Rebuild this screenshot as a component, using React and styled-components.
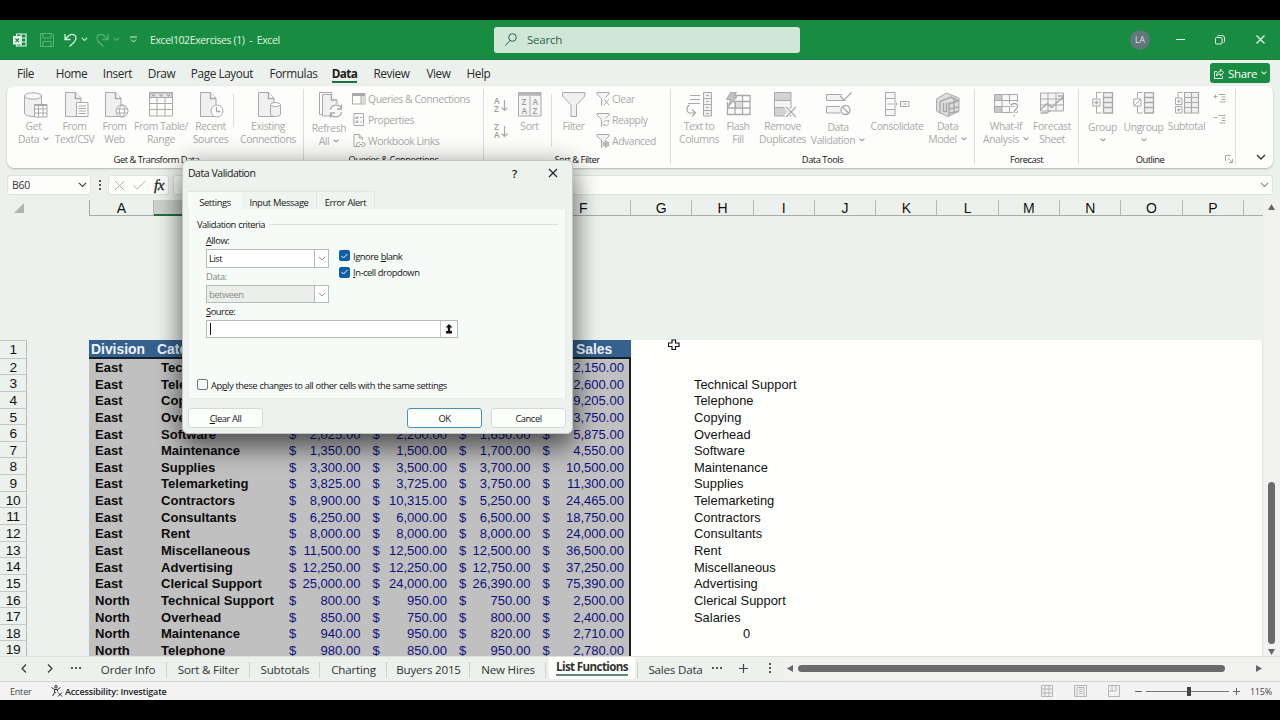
import React from 'react';
import styled, { createGlobalStyle, css } from 'styled-components';

const green = '#188c40';
const chrome = '#edf1ed';
const iconGray = '#a9a9a9';
const navy = '#10107c';

const GlobalStyle = createGlobalStyle`
  * { box-sizing: border-box; }
  body { margin: 0; background: #000; overflow: hidden; }
`;

const Screen = styled.div`
  position: relative;
  width: 1280px;
  height: 720px;
  padding: 20px 0;
  display: flex;
  flex-direction: column;
  overflow: hidden;
  background: #000;
  font-family: 'Open Sans', 'Noto Sans', sans-serif;
  white-space: nowrap;
`;

/* ---------- title bar ---------- */
const TitleBar = styled.header`
  display: grid;
  grid-template-columns: 40px 24px 32px 34px 20px 344px 306px 360px 40px 40px 40px;
  align-items: center;
  flex: 0 0 40px;
  background: ${green};
  border-bottom: 1px solid #11803a;
  color: #fff;
`;
const TitleSlot = styled.div`
  display: flex;
  align-items: center;
  gap: 4px;
  justify-content: ${(p) => p.$align || 'flex-start'};
  padding-right: ${(p) => p.$pr || 0}px;
`;
const FileName = styled.span`
  padding-top: 1px;
  font-size: 10.5px;
  letter-spacing: -0.4px;
  color: #e2f3e6;
  white-space: pre;
`;
const SearchBox = styled.div`
  display: flex;
  align-items: center;
  gap: 10px;
  height: 26px;
  padding-left: 11px;
  border-radius: 3px;
  background: #d0e6d7;
  color: #28663f;
  font-size: 11.5px;
  letter-spacing: -0.2px;
`;
const Avatar = styled.div`
  width: 20px;
  height: 20px;
  border-radius: 50%;
  background: #64767a;
  color: #dde6e6;
  font-size: 8.5px;
  line-height: 20px;
  text-align: center;
`;

/* ---------- menu tabs ---------- */
const MenuBar = styled.nav`
  display: flex;
  align-items: flex-start;
  flex: 0 0 26px;
  padding: 3px 10px 0 8px;
  background: ${chrome};
`;
const MenuItem = styled.div`
  display: flex;
  justify-content: center;
  width: ${(p) => p.$w}px;
  font-size: 11.8px;
  line-height: 21px;
  letter-spacing: -0.42px;
  color: #2b2b2b;
`;
const MenuText = styled.span`
  height: 20px;
  ${(p) => p.$active && css`
    font-weight: 700;
    letter-spacing: -0.65px;
    color: #1b1b1b;
    border-bottom: 2px solid #1a7340;
  `}
`;
const ShareButton = styled.div`
  display: flex;
  align-items: center;
  gap: 4px;
  margin-left: auto;
  width: 60px;
  height: 20px;
  padding-left: 4px;
  border-radius: 3px;
  background: ${green};
  color: #fff;
  font-size: 11.5px;
  letter-spacing: -0.35px;
`;

/* ---------- ribbon ---------- */
const RibbonWrap = styled.div`
  flex: 0 0 89px;
  padding: 0 7px;
  background: ${chrome};
`;
const Ribbon = styled.div`
  display: flex;
  height: 82px;
  padding-top: 3px;
  border-radius: 7px;
  background: #fdfefb;
  box-shadow: 0 1px 2px rgba(0, 0, 0, 0.25);
`;
const Group = styled.section`
  display: flex;
  flex-direction: column;
  justify-content: space-between;
  width: ${(p) => p.$w}px;
  height: 75px;
  border-right: 1px solid #dcdcdc;
`;
const GroupBody = styled.div`
  display: flex;
  height: 64px;
  padding-left: ${(p) => p.$pl || 0}px;
`;
const GroupLabel = styled.div`
  display: flex;
  justify-content: center;
  height: 10px;
  padding-left: ${(p) => p.$pl || 0}px;
  padding-right: ${(p) => p.$pr || 0}px;
  font-size: 9.4px;
  line-height: 11px;
  letter-spacing: -0.5px;
  color: #161616;
`;
const Tool = styled.div`
  display: flex;
  flex-direction: column;
  align-items: center;
  width: ${(p) => p.$w}px;
  padding-top: 3px;
`;
const ToolIcon = styled.div`
  height: ${(p) => 27 + (p.$drop || 0)}px;
  padding-left: ${(p) => (p.$dx || 0) * 2}px;
`;
const ToolText = styled.div`
  display: flex;
  align-items: center;
  gap: 4px;
  height: 13px;
  font-size: 10.4px;
  letter-spacing: -0.4px;
  color: #a9a9a9;
`;
const Divider = styled.div`
  width: 1px;
  height: ${(p) => p.$h}px;
  margin-top: 5px;
  background: #dcdcdc;
`;
const SmallList = styled.div`
  display: flex;
  flex-direction: column;
  width: ${(p) => p.$w}px;
  padding-left: ${(p) => p.$pl || 0}px;
  margin-top: -1px;
`;
const SortPair = styled.div`
  display: flex;
  flex-direction: column;
  gap: 6px;
  width: 24px;
  padding: 7px 0 0 9px;
`;
const SmallTool = styled.div`
  display: flex;
  align-items: center;
  gap: 2px;
  height: 21.3px;
  font-size: 10.4px;
  letter-spacing: -0.44px;
  color: #a9a9a9;
`;
const RibbonEnd = styled.div`
  display: flex;
  align-items: flex-end;
  justify-content: center;
  flex: 1;
  padding: 0 0 8px 13px;
`;
const OutlineFooter = styled.div`
  display: grid;
  grid-template-columns: 1fr 8px;
  padding: 0 2px 0 0;
  align-items: center;
`;

/* ---------- formula bar ---------- */
const FormulaBar = styled.div`
  display: grid;
  grid-template-columns: 84px 17px 61px 1fr;
  column-gap: 0;
  flex: 0 0 25px;
  align-items: start;
  padding: 0 7px;
  background: ${chrome};
`;
const BarBox = styled.div`
  display: flex;
  align-items: center;
  justify-content: ${(p) => p.$justify || 'space-between'};
  gap: 8px;
  height: 20px;
  margin-left: ${(p) => p.$ml || 0}px;
  padding: 0 3px 0 4px;
  border: 1px solid #e0e3e0;
  border-radius: 3px;
  background: #fdfefb;
  font-size: 10.5px;
  letter-spacing: -0.3px;
  color: #333;
`;
const Dots = styled.div`
  display: flex;
  flex-direction: ${(p) => (p.$row ? 'row' : 'column')};
  gap: 2px;
  align-self: center;
  justify-self: center;
  padding-bottom: ${(p) => p.$pb || 0}px;
  i { width: 2px; height: 2px; border-radius: 1px; background: #222; }
`;
const Fx = styled.span`
  font-family: 'Liberation Serif', serif;
  font-style: italic;
  font-size: 15px;
  color: #222;
  -webkit-text-stroke: 0.3px #222;
`;

/* ---------- grid ---------- */
const SheetArea = styled.main`
  display: flex;
  flex: 0 0 456px;
  min-height: 0;
  height: 456px;
  overflow: hidden;
  background: ${chrome};
`;
const Sheet = styled.div`
  width: 1263px;
  height: 456px;
  display: flex;
  flex-direction: column;
  font-family: 'Liberation Sans', Arial, sans-serif;
`;
const HeaderRow = styled.div`
  display: flex;
  flex: 0 0 16px;
  height: 16px;
`;
const Corner = styled.div`
  width: 89px;
  padding: 3px 0 0 14px;
  svg { display: block; }
`;
const ColHead = styled.div`
  width: ${(p) => p.$w}px;
  height: 16px;
  font-size: 14px;
  line-height: 17px;
  text-align: center;
  color: #111;
  border-left: ${(p) => (p.$first ? '1px solid #a8aca8' : 0)};
  border-right: 1px solid #b4b8b4;
  border-bottom: 1px solid #a8aca8;
  flex-shrink: 0;
  ${(p) => p.$selected && css`
    background: #cfd1cf;
    border-bottom: 2px solid #1a7340;
  `}
`;
const ColHeadRest = styled.div`
  flex: 1;
  border-bottom: 1px solid #a8aca8;
`;
const FrozenGap = styled.div`
  flex: 0 0 124px;
`;
const GridBody = styled.div`
  display: flex;
  flex: 1;
  min-height: 0;
  overflow: hidden;
`;
const RowHeads = styled.div`
  width: 27px;
  border-right: 1px solid #b9bdb9;
  margin-right: 62px;
`;
const RowHead = styled.div`
  height: ${(p) => (p.$first ? 18.6 : 16.65)}px;
  font-size: 13.7px;
  line-height: ${(p) => (p.$first ? 18 : 17)}px;
  text-align: center;
  letter-spacing: -0.4px;
  color: #111;
  border-top: ${(p) => (p.$first ? '1px solid #c4c8c4' : 0)};
  border-bottom: 1px solid #c4c8c4;
`;
const DataTable = styled.div`
  width: 542px;
  background: #c0c0c0;
  border-right: 2px solid #1c1c1c;
`;
const cols = '65px 129px 83.5px 86.5px 83.5px 92.5px';
const DataHead = styled.div`
  display: grid;
  grid-template-columns: ${cols};
  width: 542px;
  height: 19px;
  padding-left: 2px;
  background: #36618f;
  border-bottom: 2px solid #14202e;
  font-size: 13.9px;
  font-weight: 700;
  line-height: 19px;
  color: #f2f6fa;
`;
const HeadCell = styled.span`
  padding-left: ${(p) => p.$pl || 0}px;
`;
const DataRow = styled.div`
  display: grid;
  grid-template-columns: ${cols};
  height: 16.65px;
  font-size: 13.05px;
  line-height: 17px;
`;
const Label = styled.span`
  padding-left: ${(p) => p.$pl}px;
  font-weight: 700;
  color: #0b0b0b;
`;
const Money = styled.span`
  display: flex;
  justify-content: space-between;
  padding: 0 ${(p) => (p.$last ? 5 : 6)}px 0 6px;
  color: ${navy};
`;
const ListPane = styled.div`
  flex: 1;
  padding: 35.6px 0 0 63px;
  background: #fefffc;
  border-right: 1px solid #dfe3df;
  font-size: 12.9px;
  color: #111;
`;
const ListItem = styled.div`
  height: 16.65px;
  line-height: 17px;
  padding-left: ${(p) => (p.$number ? 49 : 0)}px;
`;
const VScroll = styled.div`
  display: flex;
  flex-direction: column;
  align-items: center;
  width: 17px;
  padding-top: 4px;
  background: #f1f2f0;
`;
const VThumb = styled.div`
  flex-shrink: 0;
  width: 7px;
  height: 162px;
  margin: 271px 0 4px;
  border-radius: 4px;
  background: #6b6b6b;
`;

/* ---------- sheet tabs ---------- */
const TabsBar = styled.div`
  display: flex;
  flex: 0 0 26px;
  height: 26px;
  border-top: 1px solid #dde1dd;
  border-bottom: 1px solid #d0d4d0;
  background: ${chrome};
`;
const TabsNav = styled.div`
  display: grid;
  grid-template-columns: 27px 26px 26px;
  justify-items: center;
  align-items: center;
  flex: 0 0 89px;
  padding: 0 0 2px 10px;
`;
const SheetTab = styled.div`
  flex: 0 0 ${(p) => p.$w}px;
  display: flex;
  justify-content: center;
  font-size: 11.6px;
  line-height: 25px;
  letter-spacing: -0.2px;
  color: #333;
  position: relative;
  &::after {
    content: '';
    position: absolute;
    right: 0;
    top: 5px;
    height: 16px;
    border-right: ${(p) => (p.$last ? 0 : 1)}px solid #cfd3cf;
  }
  ${(p) => p.$active && css`
    span {
      height: 22px;
      padding: 0 7px;
      background: #fefffc;
      border-radius: 0 0 4px 4px;
    }
    b {
      display: block;
      height: 19px;
      line-height: 20px;
      font-weight: 700;
      letter-spacing: -0.62px;
      border-bottom: 2px solid #5b8b74;
    }
  `}
`;
const TabTools = styled.div`
  display: grid;
  grid-template-columns: 24px 28px 26px;
  align-items: center;
  justify-items: center;
  flex: 0 0 78px;
  margin-left: -8px;
  padding-bottom: 2px;
`;
const HScroll = styled.div`
  display: flex;
  align-items: center;
  flex: 1;
  padding: 0 19px 1px 4px;
  background: #f1f2f0;
`;
const HThumb = styled.div`
  flex: 0 0 427px;
  height: 7px;
  margin: 0 30px 0 4px;
  border-radius: 4px;
  background: #6b6b6b;
`;

/* ---------- status bar ---------- */
const StatusBar = styled.footer`
  display: flex;
  align-items: center;
  flex: 0 0 18px;
  height: 18px;
  padding: 0 8px 0 10px;
  background: #f3f3f3;
  font-size: 9px;
  letter-spacing: -0.2px;
  color: #444;
`;
const Mode = styled.span`
  width: 41px;
`;
const Access = styled.span`
  display: flex;
  align-items: center;
  gap: 2px;
  font-weight: 600;
  letter-spacing: -0.15px;
  color: #222;
`;
const ViewIcons = styled.div`
  display: flex;
  gap: 21px;
  margin-left: auto;
  margin-right: 15px;
`;
const Zoom = styled.div`
  display: flex;
  align-items: center;
  gap: 4px;
  margin-right: 10px;
`;
const ZoomTrack = styled.div`
  display: flex;
  justify-content: center;
  align-items: center;
  width: 83px;
  height: 10px;
  background: linear-gradient(#777, #777) center / 100% 1px no-repeat;
  &::before {
    content: '';
    width: 4px;
    height: 9px;
    margin-left: 4px;
    background: #444;
  }
`;

/* ---------- dialog ---------- */
const Dialog = styled.div`
  position: absolute;
  left: 182px;
  top: 160px;
  width: 391px;
  height: 274px;
  display: flex;
  flex-direction: column;
  padding: 0 6px 0 5px;
  border: 1px solid #c3c7c4;
  border-radius: 6px;
  background: #eef2ef;
  box-shadow: 0 14px 26px rgba(0, 0, 0, 0.5), 0 0 26px rgba(0, 0, 0, 0.22);
  font-size: 9.4px;
  letter-spacing: -0.47px;
  word-spacing: 0.3px;
  color: #161616;
  u { text-underline-offset: 1px; }
`;
const DialogTitle = styled.div`
  display: grid;
  grid-template-columns: 1fr 36px 18px;
  align-items: center;
  height: 30px;
  padding-bottom: 6px;
  font-size: 10.5px;
  letter-spacing: -0.5px;
  svg { display: block; }
`;
const Help = styled.span`
  font-size: 11.5px;
  font-weight: 600;
`;
const DialogTabs = styled.div`
  display: flex;
  height: 18px;
`;
const DialogTab = styled.div`
  width: ${(p) => p.$w}px;
  line-height: 22px;
  text-align: center;
  border-right: 1px solid #e2e6e3;
  border-top: 1px solid #e2e6e3;
  background: ${(p) => (p.$active ? '#f7fbf8' : '#f0f4f1')};
  letter-spacing: -0.4px;
  ${(p) => p.$active && css`border-right: 0; line-height: 21px;`}
`;
const Panel = styled.div`
  display: flex;
  flex-direction: column;
  height: 190px;
  padding: 8px 7px 0 8px;
  border: 1px solid #e8ece9;
  border-top: 0;
  background: #f7fbf8;
`;
const Legend = styled.div`
  display: flex;
  align-items: center;
  gap: 5px;
  height: 14px;
  &::after {
    content: '';
    flex: 1;
    height: 1px;
    background: #dde1de;
  }
`;
const Criteria = styled.div`
  display: flex;
  gap: 10px;
  padding: 2px 0 0 9px;
`;
const Fields = styled.div`
  display: flex;
  flex-direction: column;
  width: 123px;
`;
const FieldLabel = styled.label`
  height: ${(p) => p.$h}px;
  line-height: ${(p) => p.$h}px;
  color: ${(p) => (p.$disabled ? '#7f8380' : 'inherit')};
`;
const Select = styled.div`
  display: flex;
  justify-content: space-between;
  height: ${(p) => (p.$disabled ? 18 : 19)}px;
  border: 1px solid #b7bbb8;
  background: ${(p) => (p.$disabled ? '#eceeec' : '#fefffe')};
  color: ${(p) => (p.$disabled ? '#8a8d8a' : 'inherit')};
  line-height: 18px;
  padding-left: 2px;
`;
const SelectArrow = styled.div`
  display: flex;
  align-items: center;
  justify-content: center;
  width: 14px;
  border-left: 1px solid #b7bbb8;
  background: #fefffe;
`;
const Checks = styled.div`
  display: flex;
  flex-direction: column;
  gap: 2.7px;
  padding-top: 16px;
`;
const CheckRow = styled.div`
  display: flex;
  align-items: center;
  gap: 3px;
  height: 14px;
`;
const CheckBox = styled.div`
  display: flex;
  align-items: center;
  justify-content: center;
  width: 11px;
  height: 11px;
  margin-bottom: 1px;
  border-radius: 2px;
  border: 1px solid ${(p) => (p.$on ? '#0b5fa8' : '#777')};
  background: ${(p) => (p.$on ? '#0b5fa8' : '#fbfdfb')};
`;
const SourceInput = styled.div`
  display: flex;
  justify-content: space-between;
  align-items: center;
  width: 252px;
  height: 18px;
  margin-left: 9px;
  padding-left: 3px;
  border: 1px solid #b7bbb8;
  background: #fefffe;
`;
const Caret = styled.div`
  width: 1px;
  height: 12px;
  background: #111;
`;
const PickButton = styled.div`
  display: flex;
  align-items: center;
  justify-content: center;
  width: 17px;
  height: 16px;
  border-left: 1px solid #c9cdca;
`;
const ApplyRow = styled.div`
  margin-top: auto;
  padding-bottom: 6px;
`;
const Footer = styled.div`
  display: flex;
  gap: 9px;
  padding-top: 9px;
`;
const Button = styled.div`
  width: 75px;
  height: 20px;
  margin-right: ${(p) => (p.$left ? 'auto' : 0)};
  border: 1px solid ${(p) => (p.$primary ? '#4a90c4' : '#d6dad7')};
  border-radius: 3px;
  background: #fcfefc;
  line-height: 19px;
  text-align: center;
`;
const Pointer = styled.svg`
  position: absolute;
  left: 668px;
  top: 339px;
`;

/* ---------- icons ---------- */
const Chevron = ({ size = 6, color = '#999', w = 1.1 }) => (
  <svg width={size} height={size * 0.6} viewBox="0 0 10 6" fill="none" stroke={color} strokeWidth={(w * 10) / size}>
    <path d="M1 1l4 4 4-4" />
  </svg>
);

const IconSvg = styled.svg`
  display: block;
  flex-shrink: 0;
`;
const Icon = ({ w = 26, h = 26, children, color = iconGray }) => (
  <IconSvg width={w} height={h} viewBox={`0 0 ${w} ${h}`} fill="none" stroke={color} strokeWidth="1">
    {children}
  </IconSvg>
);

const Doc = () => (
  <>
    <path d="M1.500 .5h10l5.500 5.500v18.500h-15.500z" fill="#f0f0f0" />
    <path d="M11.500 .5v6h5.500" fill="#fff" strokeWidth="1.500" />
  </>
);

const GetDataIcon = () => (
  <Icon>
    <path d="M1.500 4v17c0 2 4 3.500 8.500 3.500s8.500-1.500 8.500-3.500v-17" fill="#f0f0f0" />
    <ellipse cx="10" cy="4" rx="8.500" ry="3.200" fill="#f7f7f7" />
    <path d="M11.500 12.500h12.500v12.500h-12.500z" fill="#fff" />
    <path d="M11.500 13.500h12.500M11.500 17h12.500M11.500 21h12.500M15.500 13v12M20 13v12" />
  </Icon>
);
const TextCsvIcon = () => (
  <Icon>
    <Doc />
    <path d="M12.500 10.500h11.500v14h-11.500z" fill="#fff" />
    <path d="M14.500 14h7.500M14.500 16.500h7.500M14.500 19h7.500M14.500 21.500h7.500" />
  </Icon>
);
const WebIcon = () => (
  <Icon>
    <Doc />
    <circle cx="18" cy="19" r="6" fill="#fff" />
    <ellipse cx="18" cy="19" rx="2.700" ry="6" />
    <path d="M12.500 17h11M12.500 21h11" />
  </Icon>
);
const TableIcon = () => (
  <Icon>
    <path d="M1.500 .5h23v23.500h-23z" />
    <path d="M2 1h22v4.500h-22z" fill="#e4e4e4" />
    <path d="M1.500 11.500h23M1.500 17.500h23M9 5.500v18.500M17 5.500v18.500" />
    <path d="M4 2.500l1.500 1.500L7 2.500M11.500 2.500l1.500 1.500 1.500-1.500M19 2.500l1.500 1.500L22 2.500" strokeWidth="1.300" />
  </Icon>
);
const RecentIcon = () => (
  <Icon>
    <Doc />
    <circle cx="18" cy="19" r="6" fill="#fff" />
    <path d="M17.500 15v4.500h4" strokeWidth="1.300" />
  </Icon>
);
const ExistingIcon = () => (
  <Icon>
    <Doc />
    <path d="M13.500 13v9.500c0 1 2.200 2 5 2s5-1 5-2V13" fill="#f0f0f0" />
    <ellipse cx="18.500" cy="12.500" rx="5" ry="2" fill="#fff" />
  </Icon>
);
const RefreshIcon = () => (
  <Icon>
    <path d="M4 22.500h-2.500v-22h12.500" />
    <path d="M4.500 2.500h9l5.500 5.500v16h-14.500z" fill="#f0f0f0" />
    <path d="M13.500 1.500v6.500h5.500" fill="#fff" strokeWidth="1.500" />
    <circle cx="18" cy="19" r="7" fill="#fdfefb" stroke="none" />
    <path d="M12.500 18c.5-6 9-6.500 11-1.500M23.500 12.500v4.500h-4.500M23.500 20c-.5 6-9 6.500-11 1.500M12.500 25.500v-4.500h4.500" strokeWidth="1.300" />
  </Icon>
);
const PaneIcon = () => (
  <Icon w={14} h={13}>
    <path d="M.5 1.500h12.500v10.500h-12.500z" />
    <path d="M.5 3h12.500" strokeWidth="2" />
    <path d="M9.500 4h3v7.500h-3z" fill="#ddd" stroke="none" />
    <path d="M9 3v9" />
  </Icon>
);
const PropsIcon = () => (
  <Icon w={14} h={13}>
    <path d="M2 .5h9.500v12h-9.500z" />
    <path d="M4 4h2v1.500h-2zM4 8h2v1.500h-2zM8 4.500h2M8 9h2" />
  </Icon>
);
const LinksIcon = () => (
  <Icon w={14} h={14}>
    <path d="M8 12.500h-6v-12h5l3.500 3.500v2M7 .5v3.500h3.500" />
    <path d="M8 8.500h-1.500a1.500 1.500 0 0 0 0 4h1M9.500 8.500h1.500a1.500 1.500 0 0 1 0 4h-1.500M7.500 10.500h3" />
  </Icon>
);
const SortLetters = styled.text`
  font: 600 8.5px 'Open Sans', sans-serif;
  letter-spacing: 0;
  fill: #9c9c9c;
  stroke: none;
`;
const SortSmall = ({ a, b }) => (
  <Icon w={16} h={20}>
    <SortLetters x="1" y="8">{a}</SortLetters>
    <SortLetters x="1" y="15.5">{b}</SortLetters>
    <path d="M11.500 4v10.500M8.500 11.500l3 3 3-3" strokeWidth="1.200" />
  </Icon>
);
const SortIcon = () => (
  <Icon>
    <path d="M1.500 .5h22.500v23.500h-22.500zM13 4v20" fill="#f5f5f5" />
    <path d="M1.500 2h22.500" strokeWidth="3.500" stroke="#b5b5b5" />
    <SortLetters x="4.500" y="13">Z</SortLetters>
    <SortLetters x="4.500" y="22">A</SortLetters>
    <SortLetters x="15.500" y="13">A</SortLetters>
    <SortLetters x="15.500" y="22">Z</SortLetters>
  </Icon>
);
const FilterIcon = () => (
  <Icon>
    <path d="M1.500 .5h22.500v3.500l-8.500 9v11.500h-5.500v-11.500l-8.500-9z" fill="#f0f0f0" />
  </Icon>
);
const SmallFunnel = ({ children }) => (
  <Icon w={14} h={14}>
    <path d="M6 13.500h-.5v-7l-4.500-4.500v-1.500h12v1.500l-3.500 3.500" fill="#f4f4f4" />
    {children}
  </Icon>
);
const TextColsIcon = () => (
  <Icon w={28}>
    <path d="M5 3.500h10M5 7.500h10M3 11.500h12" strokeWidth="1.200" />
    <path d="M4.500 13c-3.500 1.500-3.500 8 1 8h4.500M7 17.500l3.500 3.500-3.500 3.500" strokeWidth="1.200" />
    <path d="M18.500 .5h8v23.500h-8zM18.500 6.500h8M18.500 12.500h8M18.500 18.500h8" fill="#f0f0f0" />
    <path d="M21 3.500h3M21 9.500h3M21 15.500h3M21 21.500h3" />
  </Icon>
);
const FlashIcon = () => (
  <Icon>
    <path d="M2.500 10v12.500h22.500v-19h-15M8 9.500h17M2.500 16h22.500M10 9v13.500M17.500 3.500v19" strokeWidth="1.300" />
    <path d="M10.500 9.500h7v6.500h-7z" fill="#ddd" />
    <path d="M6 0h5.500l-3 5h3.500l-8.500 9.500 2-7h-4z" fill="#c4c4c4" stroke="#a0a0a0" />
  </Icon>
);
const RemoveDupIcon = () => (
  <Icon>
    <path d="M2.500 .5h16.500v8h-16.500z" fill="#d2d2d2" />
    <path d="M2.500 8.500h16.500v7h-16.500z" fill="#f4f4f4" />
    <path d="M2.500 15.500h16.500v8.500h-16.500z" fill="#d2d2d2" />
    <path d="M13.500 14.500l11 10.500M24.500 14.500l-11 10.500" stroke="#fdfefb" strokeWidth="4" />
    <path d="M14 15l10 10M24 15l-10 10" strokeWidth="1.300" />
  </Icon>
);
const ValidationIcon = () => (
  <Icon>
    <path d="M16 2.500h-15.500v6h19M14 14.500h-13.500v6.500h14" fill="#f2f2f2" />
    <path d="M14 4l4 4 7.500-7.500" strokeWidth="1.300" />
    <circle cx="19.500" cy="18" r="4.500" strokeWidth="1.300" fill="#fff" />
    <path d="M16.500 15l6.500 6.500" strokeWidth="1.300" />
  </Icon>
);
const ConsolidateIcon = () => (
  <Icon>
    <path d="M1.500 .5h9.500v6h-9.500zM1.500 17.500h9.500v6h-9.500zM1.500 6.500v11M11 6.500v2.500M11 15v2.500" fill="#f6f6f6" />
    <path d="M3.500 12h9.500M10 9l3.500 3-3.500 3M16.500 9.500h8.500v5h-8.500zM18.500 12h4.500" />
  </Icon>
);
const ModelIcon = () => (
  <Icon>
    <path d="M1.500 7l10-6 12.500 5v13l-11 5.500-8-3.500-3.500-2z" fill="#dedede" />
    <path d="M5 9.500l11-4.500 8 4M5 9.500v11.500M8.500 11v8.500h3v-9M14 10v14M14 12l10-3.500M14 17l10-2M14 21l10-1.500M19 7v15" strokeWidth="1.400" />
  </Icon>
);
const WhatIfIcon = () => (
  <Icon>
    <path d="M1.500 2.500h23v18h-23z" fill="#f7f7f7" />
    <path d="M2 3h7v5.500h-7zM2 14.500h7v6h-7z" fill="#c9c9c9" stroke="none" />
    <path d="M1.500 8.500h23M1.500 14.500h23M9 2.500v18M16.500 2.500v18" />
    <path d="M18 14.500c0-4 7-4 6.500 0-.3 3-3.500 3-3.500 6M21 23v1.500" stroke="#fdfefb" strokeWidth="4.500" />
    <path d="M18 14.500c0-4 7-4 6.500 0-.3 3-3.500 3-3.500 6M21 23v1.500" strokeWidth="1.400" />
  </Icon>
);
const ForecastIcon = () => (
  <Icon>
    <path d="M1.500 1h23v18h-23zM1.500 7h23M1.500 13h23M9 1v18M17 1v18" fill="#f4f4f4" />
    <path d="M1.500 17.500l7-6 4 4 11-10M19 4h5v5M1.500 21h6l4-2.500" strokeWidth="1.400" />
  </Icon>
);
const GroupIcon = ({ ungroup }) => (
  <Icon w={22}>
    <path d="M11.500 .5h9v20.500h-9zM11.500 5.500h9M11.500 10.500h9M11.500 15.500h9" fill="#f0f0f0" strokeWidth="1.300" />
    <path d="M9.500 .5h-5v6M4.500 14v7h5M.8 7h7.200v7h-7.200z" />
    {ungroup ? <path d="M2 13l5-5" /> : <path d="M2.500 10.500h4M4.500 8.500v4" strokeWidth="1.500" />}
  </Icon>
);
const SubtotalIcon = () => (
  <Icon>
    <path d="M10.500 .5h14v20.500h-14zM10.500 5.500h14M10.500 10.500h14M10.500 15.500h14M17.500 .5v20.500" fill="#f0f0f0" strokeWidth="1.200" />
    <path d="M8.500 .5h-4.500v5M1.500 6h6.500v6.500h-6.500zM1.500 14.500h6.500v6.500h-6.500zM3 9.200h3.500M4.700 7.500v3.500M3 17.800h3.500M4.700 16v3.500" />
  </Icon>
);
const DetailIcon = ({ plus }) => (
  <Icon w={14} h={12}>
    <path d="M5.500 1.500h7M8.500 4h4M8.500 6.500h4M6.500 9h6" />
    <path d={plus ? 'M.5 3.500h4M2.500 1.500v4' : 'M.5 3.500h3.500'} />
  </Icon>
);
const ExcelIcon = () => (
  <svg width="14" height="14" viewBox="0 0 14 14" fill="none" stroke="#e6f5ea" strokeWidth="1.200">
    <path d="M3.500 3.500v-2.500h9.500v12h-9.500v-1.500M8 1v12M8.500 5h4.500M8.500 9h4.500" />
    <path d="M.5 3.500h7.500v7.500h-7.500z" fill="#e6f5ea" />
    <path d="M2.500 5.500l3.500 3.700M6 5.500l-3.500 3.700" stroke={green} />
  </svg>
);
const SaveIcon = () => (
  <svg width="14" height="14" viewBox="0 0 14 14" fill="none" stroke="#5fb27b">
    <path d="M.5 .5h11.500l1.500 1.500v11.500h-13zM3 .5v4.500h8v-4.500M3 13.500v-5h8v5" />
  </svg>
);
const UndoIcon = ({ color, flip }) => (
  <svg width="13" height="14" viewBox="0 0 13 14" fill="none" stroke={color} strokeWidth="1.300">
    <g transform={flip ? 'translate(13 0) scale(-1 1)' : undefined}>
      <path d="M1 1v5.500h5.500M1 6.200l4-3.700c3-2.500 7-.5 7 2.500 0 2-.7 3-2 4.200l-4.500 4.300" />
    </g>
  </svg>
);
const Triangle = ({ d, w = 7, h = 7 }) => (
  <IconSvg width={w} height={h} viewBox="0 0 7 7" fill="#666"><path d={d} /></IconSvg>
);
const CheckMark = () => (
  <svg width="7" height="6" viewBox="0 0 7 6" fill="none" stroke="#fff"><path d="M.5 3l2 2 4-4" /></svg>
);

/* ---------- data ---------- */
const menu = [['File', 35], ['Home', 57], ['Insert', 35], ['Draw', 53], ['Page Layout', 68], ['Formulas', 75], ['Data', 27], ['Review', 67], ['View', 27], ['Help', 53]];
const colHeads = [['A', 65], ['B', 129], ['C', 83.5], ['D', 86.5], ['E', 83.5], ['F', 94.5], ['G', 61.3], ['H', 61.3], ['I', 61.3], ['J', 61.3], ['K', 61.3], ['L', 61.3], ['M', 61.3], ['N', 61.3], ['O', 61.3], ['P', 61.3]];
const rows = [
  ['East', 'Technical Support', '700.00', '700.00', '750.00', '2,150.00'],
  ['East', 'Telephone', '850.00', '850.00', '900.00', '2,600.00'],
  ['East', 'Copying', '3,000.00', '3,100.00', '3,105.00', '9,205.00'],
  ['East', 'Overhead', '1,250.00', '1,250.00', '1,250.00', '3,750.00'],
  ['East', 'Software', '2,025.00', '2,200.00', '1,650.00', '5,875.00'],
  ['East', 'Maintenance', '1,350.00', '1,500.00', '1,700.00', '4,550.00'],
  ['East', 'Supplies', '3,300.00', '3,500.00', '3,700.00', '10,500.00'],
  ['East', 'Telemarketing', '3,825.00', '3,725.00', '3,750.00', '11,300.00'],
  ['East', 'Contractors', '8,900.00', '10,315.00', '5,250.00', '24,465.00'],
  ['East', 'Consultants', '6,250.00', '6,000.00', '6,500.00', '18,750.00'],
  ['East', 'Rent', '8,000.00', '8,000.00', '8,000.00', '24,000.00'],
  ['East', 'Miscellaneous', '11,500.00', '12,500.00', '12,500.00', '36,500.00'],
  ['East', 'Advertising', '12,250.00', '12,250.00', '12,750.00', '37,250.00'],
  ['East', 'Clerical Support', '25,000.00', '24,000.00', '26,390.00', '75,390.00'],
  ['North', 'Technical Support', '800.00', '950.00', '750.00', '2,500.00'],
  ['North', 'Overhead', '850.00', '750.00', '800.00', '2,400.00'],
  ['North', 'Maintenance', '940.00', '950.00', '820.00', '2,710.00'],
  ['North', 'Telephone', '980.00', '850.00', '950.00', '2,780.00'],
];
const categories = ['Technical Support', 'Telephone', 'Copying', 'Overhead', 'Software', 'Maintenance', 'Supplies', 'Telemarketing', 'Contractors', 'Consultants', 'Rent', 'Miscellaneous', 'Advertising', 'Clerical Support', 'Salaries'];
const sheetTabs = [['Order Info', 78], ['Sort & Filter', 83], ['Subtotals', 70], ['Charting', 67], ['Buyers 2015', 83], ['New Hires', 76], ['List Functions', 92], ['Sales Data', 75]];

const RibbonTool = ({ w, dx, drop, icon, lines, arrow }) => (
  <Tool $w={w}>
    <ToolIcon $dx={dx} $drop={drop}>{icon}</ToolIcon>
    {lines.map((line, i) => (
      <ToolText key={line || i}>
        {line}
        {arrow && i === lines.length - 1 && <Chevron />}
      </ToolText>
    ))}
  </Tool>
);

const RibbonBar = () => (
  <RibbonWrap>
    <Ribbon>
      <Group $w={297}>
        <GroupBody $pl={6}>
          <RibbonTool w={41} dx={2.5} icon={<GetDataIcon />} lines={['Get', 'Data']} arrow />
          <RibbonTool w={41} dx={2} icon={<TextCsvIcon />} lines={['From', 'Text/CSV']} />
          <RibbonTool w={39} dx={2} icon={<WebIcon />} lines={['From', 'Web']} />
          <RibbonTool w={54} icon={<TableIcon />} lines={['From Table/', 'Range']} />
          <RibbonTool w={45} dx={1.5} icon={<RecentIcon />} lines={['Recent', 'Sources']} />
          <Divider $h={33} />
          <RibbonTool w={68} dx={1.5} icon={<ExistingIcon />} lines={['Existing', 'Connections']} />
        </GroupBody>
        <GroupLabel $pl={3}>Get &amp; Transform Data</GroupLabel>
      </Group>
      <Group $w={180}>
        <GroupBody $pl={3}>
          <RibbonTool w={44} dx={1.5} drop={2} icon={<RefreshIcon />} lines={['Refresh', 'All']} arrow />
          <SmallList $w={130} $pl={1}>
            <SmallTool><PaneIcon />Queries &amp; Connections</SmallTool>
            <SmallTool><PropsIcon />Properties</SmallTool>
            <SmallTool><LinksIcon />Workbook Links</SmallTool>
          </SmallList>
        </GroupBody>
        <GroupLabel>Queries &amp; Connections</GroupLabel>
      </Group>
      <Group $w={187}>
        <GroupBody>
          <SortPair>
            <SortSmall a="A" b="Z" />
            <SortSmall a="Z" b="A" />
          </SortPair>
          <RibbonTool w={43} icon={<SortIcon />} lines={['Sort']} />
          <Divider $h={53} />
          <RibbonTool w={43} icon={<FilterIcon />} lines={['Filter']} />
          <SmallList $w={74} $pl={1}>
            <SmallTool><SmallFunnel><path d="M8 7l5 6M13 7l-5 6" /></SmallFunnel>Clear</SmallTool>
            <SmallTool><SmallFunnel><path d="M8 9.500c.5-2.500 3.500-2.500 4.500-.5v-2M12.500 10.500c-.5 2.500-3.500 2.500-4.500.5v2" /></SmallFunnel>Reapply</SmallTool>
            <SmallTool><SmallFunnel><circle cx="10" cy="10" r="2.500" /><path d="M10 6v8M6.500 8l7 4M6.500 12l7-4" /></SmallFunnel>Advanced</SmallTool>
          </SmallList>
        </GroupBody>
        <GroupLabel>Sort &amp; Filter</GroupLabel>
      </Group>
      <Group $w={304}>
        <GroupBody $pl={7}>
          <RibbonTool w={42} icon={<TextColsIcon />} lines={['Text to', 'Columns']} />
          <RibbonTool w={36} icon={<FlashIcon />} lines={['Flash', 'Fill']} />
          <RibbonTool w={53} dx={2} icon={<RemoveDupIcon />} lines={['Remove', 'Duplicates']} />
          <RibbonTool w={58} dx={1} drop={1} icon={<ValidationIcon />} lines={['Data', 'Validation']} arrow />
          <RibbonTool w={60} icon={<ConsolidateIcon />} lines={['Consolidate']} />
          <RibbonTool w={41} icon={<ModelIcon />} lines={['Data', 'Model']} arrow />
        </GroupBody>
        <GroupLabel>Data Tools</GroupLabel>
      </Group>
      <Group $w={104}>
        <GroupBody $pl={7}>
          <RibbonTool w={48} icon={<WhatIfIcon />} lines={['What-If', 'Analysis']} arrow />
          <RibbonTool w={44} icon={<ForecastIcon />} lines={['Forecast', 'Sheet']} />
        </GroupBody>
        <GroupLabel>Forecast</GroupLabel>
      </Group>
      <Group $w={157}>
        <GroupBody $pl={3}>
          <RibbonTool w={41} drop={1} icon={<GroupIcon />} lines={['Group', '']} arrow />
          <RibbonTool w={41} drop={1} icon={<GroupIcon ungroup />} lines={['Ungroup', '']} arrow />
          <RibbonTool w={45} icon={<SubtotalIcon />} lines={['Subtotal']} />
          <SmallList $w={20} $pl={4}>
            <SmallTool><DetailIcon plus /></SmallTool>
            <SmallTool><DetailIcon /></SmallTool>
          </SmallList>
        </GroupBody>
        <OutlineFooter>
          <GroupLabel $pr={4}>Outline</GroupLabel>
          <Icon w={8} h={8}><path d="M.5 6v-5.500h5.500M3 3l4 4M7.500 4v3.500h-3.500" /></Icon>
        </OutlineFooter>
      </Group>
      <RibbonEnd><Chevron size={10} color="#333" w={1.3} /></RibbonEnd>
    </Ribbon>
  </RibbonWrap>
);

const ValidationDialog = () => (
  <Dialog>
    <DialogTitle>
      Data Validation
      <Help>?</Help>
      <svg width="10" height="10" viewBox="0 0 10 10" stroke="#222" strokeWidth="1.200">
        <path d="M1 1l8 8M9 1l-8 8" />
      </svg>
    </DialogTitle>
    <DialogTabs>
      <DialogTab $w={54} $active>Settings</DialogTab>
      <DialogTab $w={75}>Input Message</DialogTab>
      <DialogTab $w={58}>Error Alert</DialogTab>
    </DialogTabs>
    <Panel>
      <Legend>Validation criteria</Legend>
      <Criteria>
        <Fields>
          <FieldLabel $h={16}><u>A</u>llow:</FieldLabel>
          <Select>List<SelectArrow><Chevron size={8} w={1} /></SelectArrow></Select>
          <FieldLabel $disabled $h={17}>Data:</FieldLabel>
          <Select $disabled>between<SelectArrow><Chevron size={8} w={1} /></SelectArrow></Select>
          <FieldLabel $h={17}><u>S</u>ource:</FieldLabel>
        </Fields>
        <Checks>
          <CheckRow><CheckBox $on><CheckMark /></CheckBox><span>Ignore <u>b</u>lank</span></CheckRow>
          <CheckRow><CheckBox $on><CheckMark /></CheckBox><span><u>I</u>n-cell dropdown</span></CheckRow>
        </Checks>
      </Criteria>
      <SourceInput>
        <Caret />
        <PickButton>
          <svg width="8" height="10" viewBox="0 0 8 10" fill="#111"><path d="M4 0l3.500 3.500H5.200V7H7v2.500H1V7h1.800V3.500H.5z" /></svg>
        </PickButton>
      </SourceInput>
      <ApplyRow>
        <CheckRow><CheckBox /><span>Ap<u>p</u>ly these changes to all other cells with the same settings</span></CheckRow>
      </ApplyRow>
    </Panel>
    <Footer>
      <Button $left><u>C</u>lear All</Button>
      <Button $primary>OK</Button>
      <Button>Cancel</Button>
    </Footer>
  </Dialog>
);

const App = () => (
  <Screen>
    <GlobalStyle />
    <TitleBar>
      <TitleSlot $align="flex-end" $pr={13}><ExcelIcon /></TitleSlot>
      <TitleSlot><SaveIcon /></TitleSlot>
      <TitleSlot><UndoIcon color="#d9efdf" /><Chevron color="#c9e8d2" size={7} /></TitleSlot>
      <TitleSlot><UndoIcon color="#57ae74" flip /><Chevron color="#57ae74" size={7} /></TitleSlot>
      <TitleSlot>
        <svg width="7" height="7" viewBox="0 0 7 7" fill="none" stroke="#d9efdf"><path d="M0 1h7M1 3.500l2.500 2.500 2.500-2.500" /></svg>
      </TitleSlot>
      <TitleSlot><FileName>{'Excel102Exercises (1)  -  Excel'}</FileName></TitleSlot>
      <SearchBox>
        <svg width="12" height="13" viewBox="0 0 12 13" fill="none" stroke="#28663f"><circle cx="7.500" cy="4.500" r="3.800" /><path d="M5 7.500l-4.500 5" /></svg>
        Search
      </SearchBox>
      <TitleSlot $align="flex-end" $pr={10}><Avatar>LA</Avatar></TitleSlot>
      <TitleSlot $align="center"><svg width="9" height="9" stroke="#e6f5ea"><path d="M0 4.500h9" /></svg></TitleSlot>
      <TitleSlot $align="center">
        <svg width="10" height="10" viewBox="0 0 10 10" fill="none" stroke="#e6f5ea"><rect x=".5" y="2.500" width="6.500" height="6.500" rx="1" /><path d="M2.500 1.500q0-1 1-1h3.500q2.500 0 2.500 2.500v3.500q0 1-1 1" /></svg>
      </TitleSlot>
      <TitleSlot $align="center">
        <svg width="9" height="9" viewBox="0 0 9 9" stroke="#e6f5ea" strokeWidth="1.200"><path d="M.5 .5l8 8M8.500 .5l-8 8" /></svg>
      </TitleSlot>
    </TitleBar>

    <MenuBar>
      {menu.map(([name, w]) => (
        <MenuItem key={name} $w={w}><MenuText $active={name === 'Data'}>{name}</MenuText></MenuItem>
      ))}
      <ShareButton>
        <svg width="10" height="11" viewBox="0 0 10 11" fill="none" stroke="#e6f5ea"><path d="M3 3.500h-2.500v7h8v-2.500M2.500 8c0-3 1.500-4.500 4-4.500v-2.500l3 3.500-3 3.500v-2c-2 0-3 .5-4 2z" /></svg>
        Share
        <Chevron color="#d9efdf" size={6} />
      </ShareButton>
    </MenuBar>

    <RibbonBar />

    <FormulaBar>
      <BarBox>B60<Chevron size={9} color="#444" w={1.2} /></BarBox>
      <Dots $pb={5}><i /><i /><i /></Dots>
      <BarBox $justify="center">
        <svg width="11" height="11" viewBox="0 0 11 11" stroke="#b0b0b0"><path d="M1 1l9 9M10 1l-9 9" /></svg>
        <svg width="13" height="10" viewBox="0 0 13 10" fill="none" stroke="#b0b0b0"><path d="M.5 5.500l3.500 3.500 8.500-8" /></svg>
        <Fx>fx</Fx>
      </BarBox>
      <BarBox $ml={4} $justify="flex-end"><Chevron size={9} color="#888" /></BarBox>
    </FormulaBar>

    <SheetArea>
      <Sheet>
        <HeaderRow>
          <Corner><svg width="10" height="10" fill="#b2b6b2"><path d="M10 0v10h-10z" /></svg></Corner>
          {colHeads.map(([c, w]) => (
            <ColHead key={c} $w={w} $first={c === 'A'} $selected={c === 'B'}>{c}</ColHead>
          ))}
          <ColHeadRest />
        </HeaderRow>
        <FrozenGap />
        <GridBody>
          <RowHeads>
            {Array.from({ length: 19 }, (_, i) => <RowHead key={i} $first={i === 0}>{i + 1}</RowHead>)}
          </RowHeads>
          <DataTable>
            <DataHead>
              <HeadCell>Division</HeadCell>
              <HeadCell $pl={1}>Category</HeadCell>
              <HeadCell $pl={24}>Jan</HeadCell>
              <HeadCell $pl={24}>Feb</HeadCell>
              <HeadCell $pl={24}>Mar</HeadCell>
              <HeadCell $pl={37.5}>Sales</HeadCell>
            </DataHead>
            {rows.map(([div, cat, ...nums], i) => (
              <DataRow key={i}>
                <Label $pl={6}>{div}</Label>
                <Label $pl={7}>{cat}</Label>
                {nums.map((n, j) => <Money key={j} $last={j === 3}><span>$</span><span>{n}</span></Money>)}
              </DataRow>
            ))}
          </DataTable>
          <ListPane>
            {categories.map((c) => <ListItem key={c}>{c}</ListItem>)}
            <ListItem $number>0</ListItem>
          </ListPane>
        </GridBody>
      </Sheet>
      <VScroll>
        <Triangle d="M3.500 0L7 6H0z" />
        <VThumb />
        <Triangle d="M3.500 7L7 1H0z" />
      </VScroll>
    </SheetArea>

    <TabsBar>
      <TabsNav>
        <svg width="6" height="9" viewBox="0 0 6 9" fill="none" stroke="#333" strokeWidth="1.200"><path d="M5 .5l-4 4 4 4" /></svg>
        <svg width="6" height="9" viewBox="0 0 6 9" fill="none" stroke="#333" strokeWidth="1.200"><path d="M1 .5l4 4-4 4" /></svg>
        <Dots $row><i /><i /><i /></Dots>
      </TabsNav>
      {sheetTabs.map(([name, w]) => (
        <SheetTab key={name} $w={w} $active={name === 'List Functions'} $last={name === 'Sales Data'}>
          {name === 'List Functions' ? <span><b>{name}</b></span> : name}
        </SheetTab>
      ))}
      <TabTools>
        <Dots $row><i /><i /><i /></Dots>
        <svg width="9" height="9" stroke="#444" strokeWidth="1.200"><path d="M0 4.500h9M4.500 0v9" /></svg>
        <Dots><i /><i /><i /></Dots>
      </TabTools>
      <HScroll>
        <Triangle d="M0 3.500L6 0v7z" />
        <HThumb />
        <Triangle d="M7 3.500L1 0v7z" />
      </HScroll>
    </TabsBar>

    <StatusBar>
      <Mode>Enter</Mode>
      <Access>
        <svg width="12" height="12" viewBox="0 0 12 12" fill="none" stroke="#333">
          <circle cx="5" cy="1.800" r="1.300" />
          <path d="M.5 2.500l3 2v3l-2 3.500M9.500 2.500l-3 2v2M3.500 4.500h3M3.500 8l1.500-1M7 7.500l4 4M11 7.500l-4 4" />
        </svg>
        Accessibility: Investigate
      </Access>
      <ViewIcons>
        <Icon w={12} h={12} color="#b5b5b5"><path d="M.5 .5h11v11h-11zM.5 4h11M.5 8h11M4 .5v11M8 .5v11" /></Icon>
        <Icon w={13} h={12} color="#b5b5b5"><path d="M.5 .5h12v11h-12zM3 2.500h7v9M3 2.500v9M5 4.500h3.500M5 6.500h3.500M5 8.500h3.500" /></Icon>
        <Icon w={12} h={12} color="#b5b5b5"><path d="M.5 .5h11v11h-11zM4 .5v5.500h4v-5.500M.5 6h4" /></Icon>
      </ViewIcons>
      <Zoom>
        <svg width="7" height="7" stroke="#666"><path d="M0 3.500h7" /></svg>
        <ZoomTrack />
        <svg width="7" height="7" stroke="#666"><path d="M0 3.500h7M3.500 0v7" /></svg>
      </Zoom>
      115%
    </StatusBar>

    <ValidationDialog />
    <Pointer width="12" height="12" viewBox="0 0 12 12" fill="#fff" stroke="#111" strokeWidth="1.200">
      <path d="M4 1h3.500v3h3.500v3.500h-3.500v3h-3.500v-3h-3.500v-3.500h3.500z" />
    </Pointer>
  </Screen>
);

export default App;
